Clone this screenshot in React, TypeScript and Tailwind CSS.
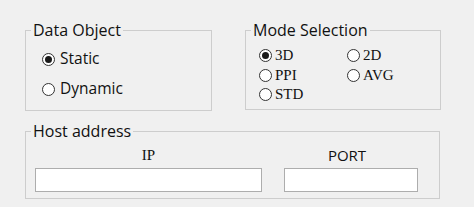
import React from 'react';

const sans = { fontFamily: '"Open Sans", "Noto Sans", sans-serif' };
const serif = { fontFamily: '"Liberation Serif", "Times New Roman", serif' };

function Radio({ label, checked, big }: { label: string; checked?: boolean; big?: boolean }) {
  return (
    <label className={`flex items-center ${big ? 'gap-[5px] h-[30px]' : 'gap-[3px] h-[19.5px]'}`}>
      <span className="flex h-[13px] w-[13px] shrink-0 items-center justify-center rounded-full border border-[#333] bg-white">
        {checked && <span className="h-[7px] w-[7px] rounded-full bg-[#1a1a1a]" />}
      </span>
      <span
        className={big ? 'text-[15.5px] leading-none text-[#111]' : 'text-[15px] leading-none text-[#111]'}
        style={big ? sans : serif}
      >
        {label}
      </span>
    </label>
  );
}

function Group({ title, className, children }: { title: string; className: string; children: React.ReactNode }) {
  return (
    <fieldset className={`border border-[#cdcdcd] ${className}`}>
      <legend className="ml-[5px] px-[2px] text-[16px] leading-[20px] text-[#111]" style={sans}>
        {title}
      </legend>
      {children}
    </fieldset>
  );
}

export default function App() {
  return (
    <div className="h-[207px] w-[474px] overflow-hidden bg-[#f0f0f0] pl-[25px] pt-[20px]">
      <div className="flex gap-[33px]">
        <Group title="Data Object" className="h-[91px] w-[187px]">
          <div className="flex flex-col pl-[16px] pt-[4px]">
            <Radio label="Static" checked big />
            <Radio label="Dynamic" big />
          </div>
        </Group>
        <Group title="Mode Selection" className="h-[90px] w-[196px]">
          <div className="grid grid-cols-[88px_88px] pl-[13px] pt-[6px]">
            <Radio label="3D" checked />
            <Radio label="2D" />
            <Radio label="PPI" />
            <Radio label="AVG" />
            <Radio label="STD" />
          </div>
        </Group>
      </div>
      <Group title="Host address" className="mt-[10px] h-[78px] w-[415px]">
        <div className="flex gap-[22px] pl-[9px] pt-[5px]">
          <div className="flex w-[227px] flex-col items-center">
            <span className="h-[18px] text-[15px] leading-[18px] text-[#111]" style={serif}>
              IP
            </span>
            <input className="mt-[4px] h-[24px] w-full border border-[#adadad] bg-white outline-none" />
          </div>
          <div className="flex w-[134px] flex-col items-center">
            <span className="h-[18px] pr-[8px] text-[15px] leading-[18px] text-[#111]" style={sans}>
              PORT
            </span>
            <input className="mt-[4px] h-[24px] w-full border border-[#adadad] bg-white outline-none" />
          </div>
        </div>
      </Group>
    </div>
  );
}
